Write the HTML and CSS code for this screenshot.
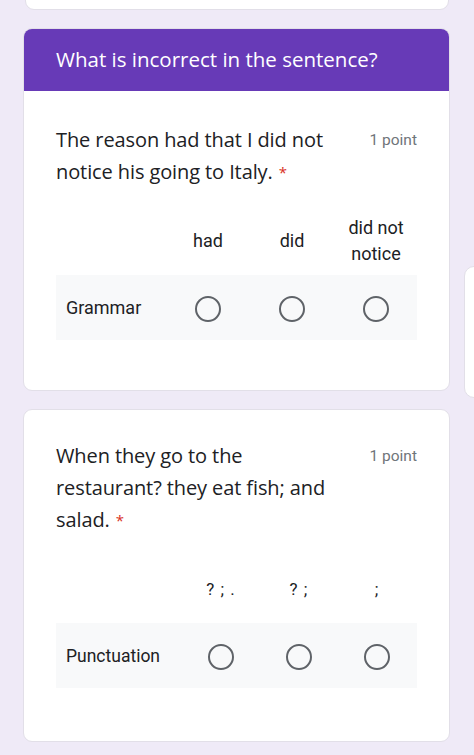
FILE: index.html
```html
<!DOCTYPE html>
<html lang="en">
<head>
    <meta charset="UTF-8">
    <meta name="viewport" content="width=device-width, initial-scale=1.0">
    <title>Quiz</title>
    <link rel="stylesheet" href="styles.css">
</head>
<body>
    <div class="card prev"></div>

    <div class="card">
        <div class="section-title">What is incorrect in the sentence?</div>
        <div class="card-body">
            <div class="question">
                <p class="q-text">The reason had that I did not notice his going to Italy.<span class="req">*</span></p>
                <span class="points">1 point</span>
            </div>
            <div class="grid">
                <div class="grid-head">
                    <span></span>
                    <span>had</span>
                    <span>did</span>
                    <span>did not notice</span>
                </div>
                <div class="grid-row">
                    <span class="row-label">Grammar</span>
                    <span class="radio"></span>
                    <span class="radio"></span>
                    <span class="radio"></span>
                </div>
            </div>
        </div>
    </div>

    <div class="card">
        <div class="card-body second">
            <div class="question">
                <p class="q-text">When they go to the restaurant? they eat fish; and salad.<span class="req">*</span></p>
                <span class="points">1 point</span>
            </div>
            <div class="grid small">
                <div class="grid-head">
                    <span></span>
                    <span>? ; .</span>
                    <span>? ;</span>
                    <span>;</span>
                </div>
                <div class="grid-row">
                    <span class="row-label">Punctuation</span>
                    <span class="radio"></span>
                    <span class="radio"></span>
                    <span class="radio"></span>
                </div>
            </div>
        </div>
    </div>

    <div class="side-tab"></div>
</body>
</html>
```

FILE: styles.css
```css
* {
    margin: 0;
    padding: 0;
    box-sizing: border-box;
}

body {
    font-family: "Open Sans", Roboto, sans-serif;
    background: #efeaf7;
    color: #202124;
    padding: 0 24px 0 23px;
    position: relative;
    height: 755px;
    overflow: hidden;
}

/* Cards */
.card {
    background: white;
    border: 1px solid #e2dfe8;
    border-radius: 9px;
    margin-bottom: 18px;
    overflow: hidden;
}

.card.prev {
    height: 20px;
    margin-top: -10px;
    margin-left: 2px;
    margin-right: 1px;
}

.section-title {
    background: #673ab7;
    color: white;
    font-size: 20.5px;
    padding: 16px 32px 0;
    height: 62px;
}

.card-body {
    padding: 33px 32px 50px;
}

.card-body.second {
    padding-top: 30px;
    padding-bottom: 53px;
}

/* Question */
.question {
    display: flex;
    justify-content: space-between;
    align-items: flex-start;
}

.q-text {
    font-size: 20px;
    line-height: 32px;
    width: 292px;
    letter-spacing: -0.1px;
}

.req {
    margin-left: 6px;
    color: #d93025;
    font-size: 15px;
    vertical-align: top;
}

.points {
    font-family: Roboto, sans-serif;
    font-size: 15.5px;
    color: #70757a;
    padding-top: 7px;
}

/* Grid */
.grid {
    margin-top: 25px;
}

.grid-head,
.grid-row {
    display: grid;
    grid-template-columns: 110px 84px 84px 84px;
    align-items: center;
    text-align: center;
}

.grid-head {
    font-family: Roboto, sans-serif;
    font-size: 18px;
    line-height: 26px;
    height: 62px;
    padding-bottom: 6px;
}

.grid-head span:last-child {
    padding: 0 6px;
}

.grid-row {
    background: #f8f9fa;
    height: 65px;
}

.row-label {
    font-family: Roboto, sans-serif;
    font-size: 18px;
    text-align: left;
    padding-left: 10px;
}

.radio {
    justify-self: center;
    width: 26px;
    height: 26px;
    border: 2px solid #5f6368;
    border-radius: 50%;
    margin-top: 2px;
}

.grid.small {
    margin-top: 25px;
}

.grid.small .grid-head,
.grid.small .grid-row {
    grid-template-columns: 126px 78px 78px 78px;
}

.grid.small .grid-head {
    font-size: 17px;
    letter-spacing: 1px;
}

.grid.small .row-label {
    font-size: 17.5px;
}

/* Floating tab on the right edge */
.side-tab {
    position: absolute;
    right: -12px;
    top: 266px;
    width: 22px;
    height: 132px;
    background: white;
    border: 1px solid #e2dfe8;
    border-radius: 10px;
}
```
